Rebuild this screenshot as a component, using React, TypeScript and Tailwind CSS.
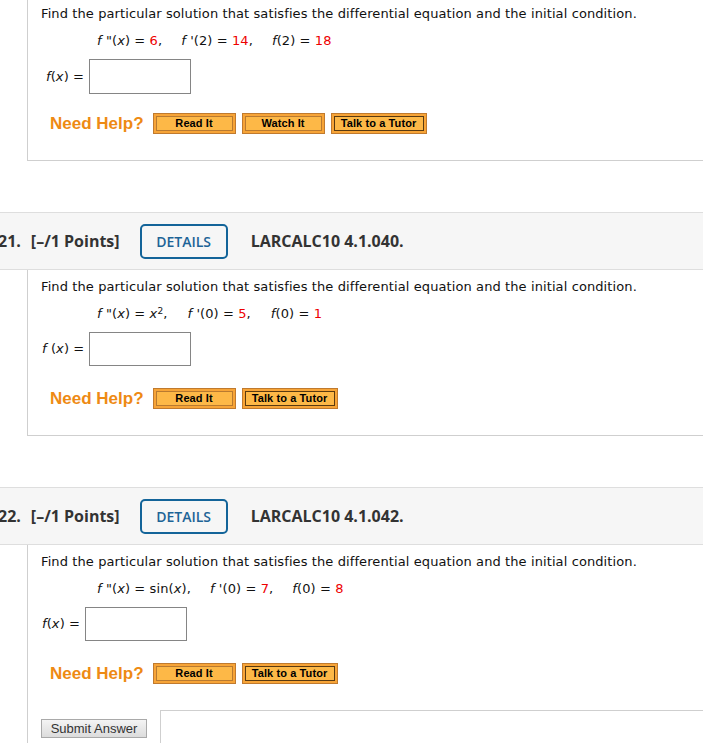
import React from "react";

const body = { fontFamily: '"DejaVu Sans", Verdana, sans-serif' } as React.CSSProperties;
const arial = { fontFamily: '"Liberation Sans", Arial, sans-serif' } as React.CSSProperties;
const open = { fontFamily: '"Open Sans", "Noto Sans", sans-serif' } as React.CSSProperties;

function Btn({ label, w, dark }: { label: string; w: string; dark?: boolean }) {
  return (
    <div className={`${w} h-[21px] border border-[#c07a2e] bg-[#f7a437] p-[2px]`}>
      <div
        className={`h-full w-full border ${dark ? "border-[#5a3a10]" : "border-[#b97a30]"} bg-[#fdb847] flex items-center justify-center text-[11px] font-bold text-black leading-none`}
        style={arial}
      >
        {label}
      </div>
    </div>
  );
}

function NeedHelp({ watch, mt }: { watch?: boolean; mt: string }) {
  return (
    <div className={`${mt} flex items-center h-[21px] ml-[9px]`}>
      <span className="text-[17px] font-bold text-[#ee8a14] mr-[9px] leading-none tracking-normal" style={arial}>
        Need Help?
      </span>
      <div className="flex gap-[6px]">
        <Btn label="Read It" w="w-[83px]" />
        {watch && <Btn label="Watch It" w="w-[83px]" />}
        <Btn label="Talk to a Tutor" w="w-[96px]" dark />
      </div>
    </div>
  );
}

function Red({ children }: { children: React.ReactNode }) {
  return <span className="text-[#ee0000]">{children}</span>;
}

function Header({ num, code }: { num: string; code: string }) {
  return (
    <div className="mt-[51px] h-[58px] bg-[#f6f6f6] border-y border-[#dedede] flex items-center text-[#333] tracking-normal" style={open}>
      <span className="ml-[-2px] text-[16px] font-bold">{num}</span>
      <span className="ml-[10px] text-[16px] font-bold">[–/1 Points]</span>
      <div className="ml-[20px] w-[88px] h-[35px] border-2 border-[#136499] rounded-[5px] flex items-center justify-center text-[14px] font-semibold text-[#1d6497]">
        DETAILS
      </div>
      <span className="ml-[23px] text-[16px] font-bold">{code}</span>
    </div>
  );
}

const FIND = "Find the particular solution that satisfies the differential equation and the initial condition.";

function Input({ w = "w-[102px]", h = "h-[35px]" }: { w?: string; h?: string }) {
  return <div className={`${w} ${h} border border-[#858585] bg-white`} />;
}

export default function App() {
  return (
    <div className="w-[703px] h-[743px] overflow-hidden bg-white text-[#111] text-[13px] tracking-[0.1px]" style={body}>
      {/* Section 1 (partial) */}
      <div className="ml-[27px] border-l border-b border-[#cfcfcf] pl-[13px] pt-[5px] pb-[26px]">
        <p className="leading-[18px]">{FIND}</p>
        <div className="mt-[9px] ml-[56px] leading-[18px] flex gap-[19px]">
          <span><i>f</i> "(<i>x</i>) = <Red>6</Red>,</span>
          <span><i>f</i> '(2) = <Red>14</Red>,</span>
          <span><i>f</i>(2) = <Red>18</Red></span>
        </div>
        <div className="mt-[9px] flex items-center">
          <span className="ml-[5px] mr-[5px]"><i>f</i>(<i>x</i>) =</span>
          <Input />
        </div>
        <NeedHelp watch mt="mt-[19px]" />
      </div>

      {/* Section 21 */}
      <Header num="21." code="LARCALC10 4.1.040." />
      <div className="ml-[27px] border-l border-b border-[#cfcfcf] pl-[13px] pt-[8px] pb-[26px]">
        <p className="leading-[18px]">{FIND}</p>
        <div className="mt-[9px] ml-[56px] leading-[18px] flex gap-[20px]">
          <span><i>f</i> "(<i>x</i>) = <i>x</i><sup className="text-[9px]">2</sup>,</span>
          <span><i>f</i> '(0) = <Red>5</Red>,</span>
          <span><i>f</i>(0) = <Red>1</Red></span>
        </div>
        <div className="mt-[9px] flex items-center">
          <span className="ml-[1px] mr-[5px]"><i>f</i> (<i>x</i>) =</span>
          <Input h="h-[34px]" />
        </div>
        <NeedHelp mt="mt-[22px]" />
      </div>

      {/* Section 22 */}
      <Header num="22." code="LARCALC10 4.1.042." />
      <div className="ml-[27px] border-l border-[#cfcfcf] pl-[13px] pt-[8px]">
        <p className="leading-[18px]">{FIND}</p>
        <div className="mt-[9px] ml-[56px] leading-[18px] flex gap-[19px]">
          <span><i>f</i> "(<i>x</i>) = sin(<i>x</i>),</span>
          <span><i>f</i> '(0) = <Red>7</Red>,</span>
          <span><i>f</i>(0) = <Red>8</Red></span>
        </div>
        <div className="mt-[9px] flex items-center">
          <span className="ml-[1px] mr-[5px]"><i>f</i>(<i>x</i>) =</span>
          <Input h="h-[34px]" />
        </div>
        <NeedHelp mt="mt-[22px]" />
        <div className="mt-[26px] flex items-start">
          <div
            className="mt-[9px] w-[106px] h-[19px] border border-[#a9a9a9] bg-gradient-to-b from-[#f4f4f4] to-[#dcdcdc] flex items-center justify-center text-[13px] tracking-normal text-[#333] leading-none"
            style={arial}
          >
            Submit Answer
          </div>
          <div className="ml-[13px] flex-1 h-[40px] border-l border-t border-[#cfcfcf]" />
        </div>
      </div>
    </div>
  );
}
